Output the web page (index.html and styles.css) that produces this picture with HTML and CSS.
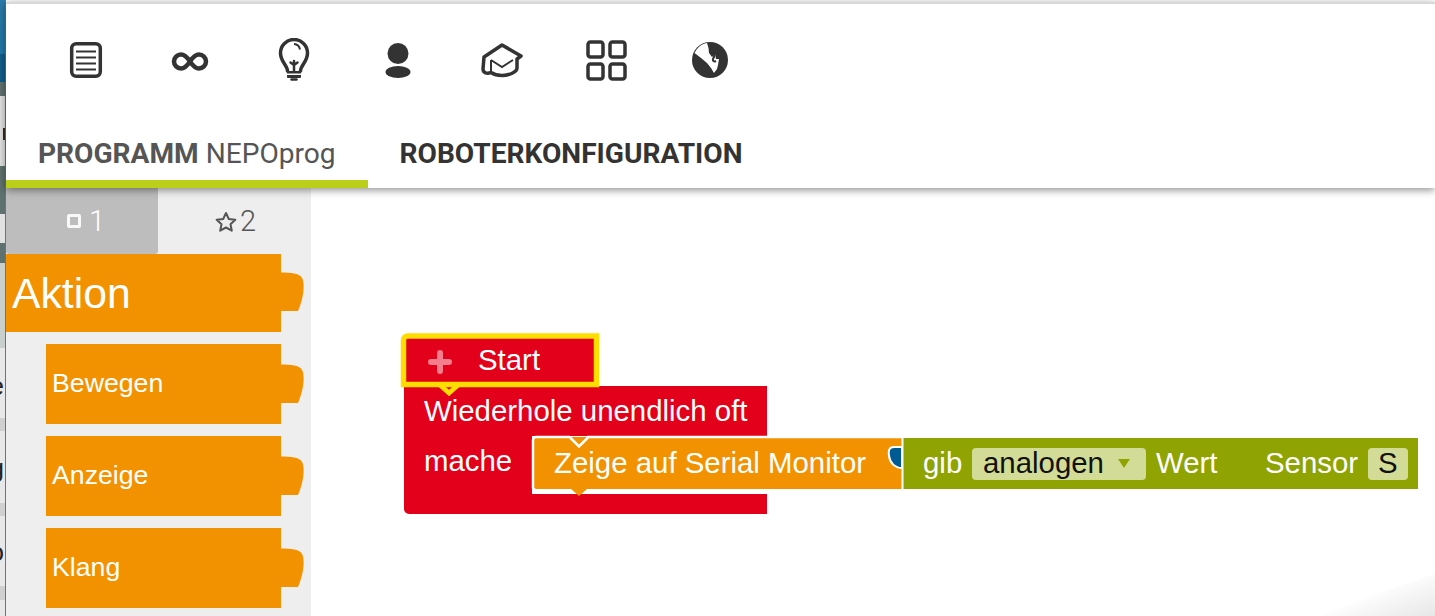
FILE: index.html
```html
<!DOCTYPE html>
<html lang="de">
<head>
  <meta charset="UTF-8">
  <title>Open Roberta Lab</title>
  <link rel="stylesheet" href="styles.css">
</head>
<body>
  <div class="behind">
    <span class="behind__e">e</span>
    <span class="behind__g">g</span>
    <span class="behind__o">o</span>
  </div>
  <div class="app">
    <header class="topbar">
      <nav class="icons">
        <a class="icons__item">
          <svg width="36" height="40" viewBox="0 0 36 40"><rect x="3.7" y="3.7" width="28.6" height="32.6" rx="4.5" class="ico-line"/><path d="M8 11.5h20M8 17.5h20M8 23.5h20M8 29.5h20" class="ico-thin"/></svg>
        </a>
        <a class="icons__item">
          <svg width="38" height="24" viewBox="0 -1.500 38 24"><path d="M19 12C16 7.500 13 5 10 5a7 7 0 0 0 0 14C13 19 16 16.500 19 12C22 7.500 25 5 28 5a7 7 0 0 1 0 14C25 19 22 16.500 19 12Z" class="ico-line ico-line--fat"/></svg>
        </a>
        <a class="icons__item">
          <svg width="32" height="44" viewBox="0 0 32 44"><path d="M9.500 33C9.500 27 2.500 24 2.500 15a13.500 13.500 0 0 1 27 0C29.500 24 22.500 27 22.500 33" class="ico-line"/><path d="M16 23v10M12.500 24.500 16 27l3.500-2.500" class="ico-line ico-line--thin"/><rect x="9" y="33" width="14" height="7" rx="1" class="ico-fill"/><rect x="9" y="35.500" width="14" height="1.500" class="ico-cut"/><path d="M13.500 41.500h5" class="ico-line ico-line--thin"/><path d="M16 6c3 .2 5.500 2.500 6 5.500" class="ico-thin"/></svg>
        </a>
        <a class="icons__item">
          <svg width="26" height="36" viewBox="0 0 26 36"><circle cx="13" cy="11.500" r="10.500" class="ico-fill"/><ellipse cx="13" cy="30" rx="12.500" ry="6" class="ico-fill"/></svg>
        </a>
        <a class="icons__item">
          <svg width="42" height="36" viewBox="0 0 42 36"><path d="M21 3 40 14 36 17V26C36 30 28 33.500 21 33.500 17 33.500 13 32.500 10 30.500 6 32 2 31 2 27L3 15Z" class="ico-line"/><path d="M10 18 21 25 32 18M10 18V29" class="ico-thin"/></svg>
        </a>
        <a class="icons__item">
          <svg width="42" height="42" viewBox="0 0 42 42"><rect x="3" y="3" width="15" height="15" rx="2.500" class="ico-line"/><rect x="25" y="3" width="15" height="15" rx="2.500" class="ico-line"/><rect x="3" y="25" width="15" height="15" rx="2.500" class="ico-line"/><rect x="25" y="25" width="15" height="15" rx="2.500" class="ico-line"/></svg>
        </a>
        <a class="icons__item">
          <svg width="38" height="38" viewBox="0 0 38 38"><circle cx="19" cy="19" r="18" class="ico-fill"/><path d="M3.500 12C6 7 10 3 16 2L17.500 7 18 12 21 16 24 13 25 18 28 18 27 24 26 28 23 32 20 27 16 22 10 17Z" class="ico-cut"/><path d="M21 9C24 10 24 15 22 18 21.500 20 23 21 25 20" class="ico-thin"/></svg>
        </a>
      </nav>
      <div class="tabs">
        <a class="tabs__item tabs__item--active"><b>PROGRAMM</b> NEPOprog</a>
        <a class="tabs__item"><b>ROBOTERKONFIGURATION</b></a>
      </div>
    </header>

    <main class="workspace">
      <aside class="toolbox">
        <div class="levels">
          <div class="levels__tab levels__tab--active"><span class="levels__square"></span>1</div>
          <div class="levels__tab">
            <svg width="22" height="21" viewBox="0 0 22 21"><path d="M11 2l2.800 6 6.500.8-4.800 4.500 1.300 6.400L11 16.500l-5.800 3.200 1.300-6.400L1.700 8.800 8.200 8Z" class="levels__star"/></svg>2
          </div>
        </div>
        <div class="cat cat--main">
          <span class="cat__label">Aktion</span>
          <svg class="cat__tab" width="23" height="40" viewBox="0 0 23 40"><path d="M0 .500C10 .500 18 1 21 6 24 11 23 25 17 39H0Z"/></svg>
        </div>
        <div class="cat">
          <span class="cat__label">Bewegen</span>
          <svg class="cat__tab" width="23" height="40" viewBox="0 0 23 40"><path d="M0 .500C10 .500 18 1 21 6 24 11 23 25 17 39H0Z"/></svg>
        </div>
        <div class="cat">
          <span class="cat__label">Anzeige</span>
          <svg class="cat__tab" width="23" height="40" viewBox="0 0 23 40"><path d="M0 .500C10 .500 18 1 21 6 24 11 23 25 17 39H0Z"/></svg>
        </div>
        <div class="cat">
          <span class="cat__label">Klang</span>
          <svg class="cat__tab" width="23" height="40" viewBox="0 0 23 40"><path d="M0 .500C10 .500 18 1 21 6 24 11 23 25 17 39H0Z"/></svg>
        </div>
      </aside>

      <svg class="canvas" viewBox="311 188 1124 428">
        <defs>
          <linearGradient id="corner" gradientUnits="userSpaceOnUse" x1="1370" y1="592" x2="1388" y2="636">
            <stop offset="0" stop-color="#ffffff"/>
            <stop offset="1" stop-color="#e6e6e6"/>
          </linearGradient>
        </defs>
        <path d="M1320 616 C1370 596 1410 582 1435 574 V616 Z" fill="url(#corner)"/>

        <!-- Wiederhole -->
        <path d="M404 386H767V436H532V494H767V514H409a5 5 0 0 1-5-5Z" class="b-red"/>
        <text x="424" y="421" class="b-text">Wiederhole unendlich oft</text>
        <text x="424" y="471" class="b-text">mache</text>

        <!-- Start -->
        <path d="M403.500 384.500V340a4 4 0 0 1 4-4H596.500V384.500Z" class="b-start"/>
        <path d="M440 385 449 393 458 385" class="b-yellow-line"/>
        <path d="M440 353V371M431 362H449" class="b-plus"/>
        <text x="478" y="370" class="b-text">Start</text>

        <!-- Zeige auf Serial Monitor -->
        <path d="M537 437H903V489H587L579 496 571 489H537a3.500 3.500 0 0 1-3.500-3.500V440.500a3.500 3.500 0 0 1 3.500-3.500Z" class="b-orange"/>
        <path d="M570 437.500 579 446.500 588 437.500" class="b-white b-white--edge"/>
        <path d="M571 491.500H537a4 4 0 0 1-4-4V440a3 3 0 0 1 3-3H570M587 437H903" class="b-white b-white--edge"/>
        <text x="554" y="473" class="b-text">Zeige auf Serial Monitor</text>
        <path d="M902 447H894C889 447 888 451 889 456 890 463 895 468 902 468Z" class="b-blue"/>

        <!-- gib analogen Wert -->
        <rect x="903" y="438" width="515" height="51" class="b-green"/>
        <path d="M902.500 437V489" class="b-white"/>
        <text x="923" y="473" class="b-text">gib</text>
        <rect x="972" y="448" width="174" height="32" rx="4" class="b-field"/>
        <text x="983" y="473" class="b-text b-text--dark">analogen</text>
        <path d="M1118 459H1130L1124 468Z" class="b-arrow"/>
        <text x="1156" y="473" class="b-text">Wert</text>
        <text x="1265" y="473" class="b-text">Sensor</text>
        <rect x="1368" y="448" width="40" height="32" rx="4" class="b-field"/>
        <text x="1378" y="473" class="b-text b-text--dark">S</text>
      </svg>
    </main>
  </div>
</body>
</html>
```

FILE: styles.css
```css
* { box-sizing: border-box; }
html, body { height: 100%; }
body {
  margin: 0;
  display: flex;
  height: 616px;
  overflow: hidden;
  background: #fff;
  font-family: 'Roboto', sans-serif;
}

/* the window behind this one, only a sliver shows */
.behind {
  position: relative;
  flex: 0 0 6px;
  overflow: hidden;
  border-right: 1.500px solid #6f7472;
  background:
    linear-gradient(#3a2a20, #3a2a20) 3px 128px / 2px 12px no-repeat,
    linear-gradient(to bottom,
      #2b7aa8 0, #2176a6 54px, #115d89 54px, #115d89 82px,
      #5f716e 82px, #5f716e 96px, #e1e1e1 96px, #e1e1e1 166px,
      #5f716e 166px, #5f716e 214px, #e1e1e1 214px, #e1e1e1 243px,
      #5f716e 243px, #5f716e 263px, #c9cfcd 263px, #c9cfcd 348px,
      #e8e8e8 348px, #e8e8e8 418px, #d0d0d0 418px, #d0d0d0 431px,
      #e8e8e8 431px, #e8e8e8 503px, #d0d0d0 503px, #d0d0d0 516px,
      #e8e8e8 516px, #e8e8e8 586px, #d0d0d0 586px, #d0d0d0 600px, #e8e8e8 600px);
}
.behind span {
  position: absolute;
  right: 1px;
  font: 26px 'Liberation Sans', sans-serif;
  color: #222;
}
.behind__e { top: 371px; }
.behind__g { top: 453px; }
.behind__o { top: 537px; }

.app {
  flex: 1;
  display: flex;
  flex-direction: column;
  min-width: 0;
}

.topbar {
  position: relative;
  z-index: 2;
  flex: 0 0 186px;
  display: flex;
  flex-direction: column;
  justify-content: space-between;
  background: #fff;
  border-top: 2px solid #d8d8d8;
  margin-top: 2px;
  box-shadow: 0 2px 8px rgba(0, 0, 0, 0.45);
}

.icons {
  display: flex;
  padding: 30px 0 0 28px;
}
.icons__item {
  flex: 0 0 104px;
  height: 52px;
  display: flex;
  align-items: center;
  justify-content: center;
}
.ico-line { fill: none; stroke: #333; stroke-width: 3.500; stroke-linejoin: round; stroke-linecap: round; }
.ico-line--fat { stroke-width: 4.500; }
.ico-line--thin { stroke-width: 2.500; }
.ico-thin { fill: none; stroke: #333; stroke-width: 2; }
.ico-fill { fill: #333; }
.ico-cut { fill: #fff; }

.tabs { display: flex; }
.tabs__item {
  height: 54px;
  padding: 2px 32px 0;
  font-size: 28.100px;
  line-height: 36px;
  color: #333;
  white-space: nowrap;
}
.tabs__item b { font-weight: 700; }
.tabs__item--active {
  color: #555;
  border-bottom: 8px solid #bbcf1a;
}

.workspace {
  flex: 1;
  display: flex;
  min-height: 0;
}

.toolbox {
  flex: 0 0 305px;
  background: #eee;
  overflow: hidden;
}
.levels { display: flex; height: 66px; }
.levels__tab {
  flex: 1;
  display: flex;
  align-items: center;
  justify-content: center;
  gap: 3px;
  padding-left: 2px;
  font-size: 29px;
  font-weight: 300;
  color: #555;
}
.levels__tab--active {
  flex: 0 0 152px;
  background: #bdbdbd;
  color: #fff;
  border-radius: 0 0 3px 3px;
  gap: 8px;
  padding-left: 8px;
}
.levels__square {
  width: 14px;
  height: 14px;
  border: 3px solid #fff;
  border-radius: 2px;
  opacity: 0.9;
}
.levels__star { fill: none; stroke: #555; stroke-width: 2; stroke-linejoin: round; }

.cat {
  position: relative;
  width: 235px;
  height: 80px;
  margin: 0 0 12px 40px;
  padding-left: 6px;
  background: #f39200;
  color: #fff;
  font: 26.700px/78px 'Liberation Sans', sans-serif;
}
.cat--main {
  width: 275px;
  height: 78px;
  margin-left: 0;
  font-size: 42.700px;
  line-height: 78px;
}
.cat__tab {
  position: absolute;
  left: 100%;
  top: 20px;
  fill: #f39200;
}
.cat--main .cat__tab { top: 18px; }

.canvas {
  flex: 1;
  min-width: 0;
  display: block;
  height: 428px;
}
.b-text { font: 29.400px 'Liberation Sans', sans-serif; fill: #fff; }
.b-text--dark { fill: #111; }
.b-red { fill: #e2001a; }
.b-start { fill: #e2001a; stroke: #ffdd00; stroke-width: 5.500; }
.b-yellow-line { fill: none; stroke: #ffdd00; stroke-width: 5; }
.b-plus { stroke: #f27f8b; stroke-width: 6; stroke-linecap: round; }
.b-orange { fill: #f39200; }
.b-white { fill: none; stroke: #fff; stroke-width: 2; }
.b-white--edge { stroke-width: 2.500; }
.b-blue { fill: #005a94; stroke: #fff; stroke-width: 2; }
.b-green { fill: #8fa402; }
.b-field { fill: #d2dc96; }
.b-arrow { fill: #8fa402; }
```
